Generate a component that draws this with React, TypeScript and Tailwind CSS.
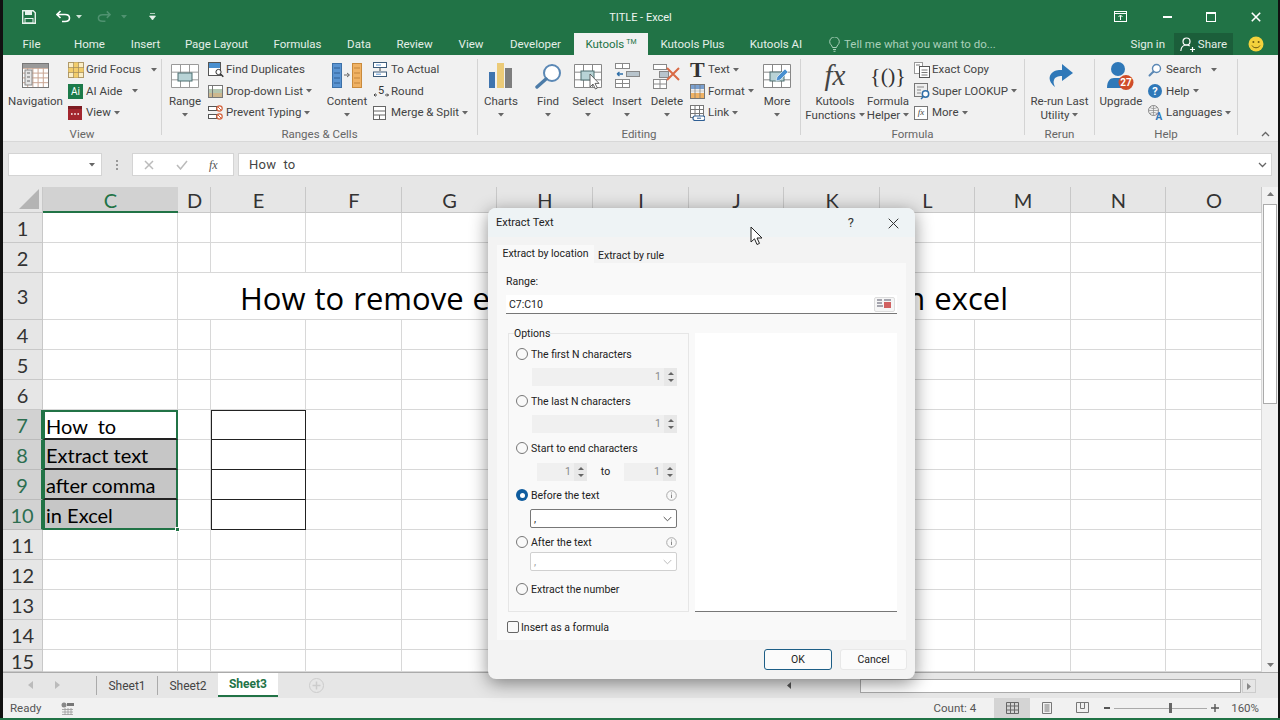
import { ReactNode } from "react";

const UI = "font-['Roboto','Open_Sans',sans-serif]";
const SHEET = "font-['Lato','Open_Sans',sans-serif]";

function Caret({ className = "" }: { className?: string }) {
  return (
    <svg width="6" height="4" viewBox="0 0 6 4" className={className}>
      <path d="M0 0h6L3 3.500z" fill="#666" />
    </svg>
  );
}

function Sheetlet({ w = 28, h = 24, cols = 4, rows = 4, color = "#8a8a8a", children }: { w?: number; h?: number; cols?: number; rows?: number; color?: string; children?: ReactNode }) {
  const lines = [];
  for (let i = 0; i <= cols; i++) lines.push(<line key={"c" + i} x1={0.5 + ((w - 1) * i) / cols} x2={0.5 + ((w - 1) * i) / cols} y1="0.5" y2={h - 0.5} stroke={color} strokeWidth="1" />);
  for (let i = 0; i <= rows; i++) lines.push(<line key={"r" + i} y1={0.5 + ((h - 1) * i) / rows} y2={0.5 + ((h - 1) * i) / rows} x1="0.5" x2={w - 0.5} stroke={color} strokeWidth="1" />);
  return (
    <svg width={w} height={h} viewBox={`0 0 ${w} ${h}`} className="overflow-visible">
      <rect x="0.5" y="0.5" width={w - 1} height={h - 1} fill="#fff" />
      {lines}
      {children}
    </svg>
  );
}

const icons: Record<string, ReactNode> = {
  nav: (
    <Sheetlet w={27} h={25} cols={5} rows={5} color="#c9a593">
      <rect x="0.5" y="0.5" width="26" height="24" fill="none" stroke="#777" />
      <rect x="1" y="1" width="25" height="4" fill="#9a9a9a" />
      <rect x="3" y="7" width="7" height="15" fill="#e5e5e5" stroke="#888" />
      <path d="M5 10h3M5 14h3M5 18h3" stroke="#666" />
    </Sheetlet>
  ),
  focus: (
    <svg width="16" height="16" viewBox="0 0 16 16">
      <rect x="0.5" y="0.5" width="15" height="15" fill="#fbeec5" stroke="#b09a6a" />
      <rect x="5.5" y="0.5" width="5" height="15" fill="#f2cd6b" />
      <rect x="0.5" y="5.5" width="15" height="5" fill="#f2cd6b" />
      <path d="M5.500 0v16M10.500 0v16M0 5.500h16M0 10.500h16" stroke="#a08a5a" strokeWidth="0.7" />
    </svg>
  ),
  ai: <div className="flex h-[15px] w-[15px] items-center justify-center bg-[#1c7a4a] text-[10px] text-white">Ai</div>,
  view: (
    <svg width="14" height="14" viewBox="0 0 14 14">
      <rect width="14" height="14" fill="#a3262e" />
      <rect y="0" width="14" height="3" fill="#7d1c22" />
      <path d="M3 8h1.600M6.200 8h1.600M9.400 8H11" stroke="#fff" strokeWidth="1.6" />
    </svg>
  ),
  range: (
    <Sheetlet w={28} h={24} cols={3} rows={3} color="#9a9a9a">
      <rect x="7" y="9" width="14" height="8" fill="#b8d3d6" stroke="#4d6f71" />
    </Sheetlet>
  ),
  dup: (
    <svg width="16" height="16" viewBox="0 0 16 16">
      <rect x="0.5" y="0.5" width="12" height="13" fill="#fff" stroke="#555" />
      <rect x="1" y="1" width="11" height="5" fill="#4a90d0" />
      <circle cx="10.5" cy="10" r="2.6" fill="#fff" stroke="#333" />
      <path d="M12.500 12l2.800 2.800" stroke="#333" strokeWidth="1.5" />
    </svg>
  ),
  drop: (
    <svg width="15" height="13" viewBox="0 0 15 13">
      <rect x="0.5" y="0.5" width="14" height="12" fill="#fff" stroke="#777" />
      <rect x="1" y="4" width="13" height="4" fill="#b4c6b0" />
      <rect x="1" y="8" width="13" height="4" fill="#cdb78e" />
      <path d="M4.500 0v13" stroke="#777" />
    </svg>
  ),
  prevent: (
    <svg width="15" height="15" viewBox="0 0 15 15">
      <rect x="0.5" y="1.5" width="8" height="4" fill="#fff" stroke="#555" />
      <rect x="0.5" y="9.5" width="8" height="4" fill="#fff" stroke="#555" />
      <circle cx="11.5" cy="3.5" r="2.7" fill="#fff" stroke="#d2603a" strokeWidth="1.2" />
      <circle cx="11.5" cy="11.5" r="2.7" fill="#fff" stroke="#d2603a" strokeWidth="1.2" />
      <path d="M9.800 1.800l3.400 3.400M9.800 9.800l3.400 3.400" stroke="#d2603a" />
    </svg>
  ),
  content: (
    <svg width="30" height="25" viewBox="0 0 30 25">
      <rect x="0.5" y="0.5" width="9" height="24" fill="#5a94d2" stroke="#3c70a8" />
      <rect x="20.5" y="0.5" width="9" height="24" fill="#f0b264" stroke="#c98a3c" />
      <path d="M2 5h6M2 10h6M2 15h6M2 20h6" stroke="#2f5f94" />
      <path d="M22 5h6M22 10h6M22 15h6M22 20h6" stroke="#c4853a" />
      <path d="M12 12h5M15 10l2.500 2-2.500 2" stroke="#666" fill="none" />
    </svg>
  ),
  actual: (
    <svg width="14" height="15" viewBox="0 0 14 15">
      <rect x="0.5" y="0.5" width="13" height="5" fill="#fff" stroke="#3c5a78" />
      <rect x="0.5" y="10" width="13" height="4.5" fill="#fff" stroke="#3c5a78" />
      <path d="M3 3h5M3 12.200h5" stroke="#5a94d2" />
      <path d="M7 6v3" stroke="#444" />
    </svg>
  ),
  round: (
    <svg width="16" height="16" viewBox="0 0 16 16" className="overflow-visible">
      <path d="M1 12h3M1 12l1.500-1.500M1 12l1.500 1.500M12 12h3.500M15.500 12L14 10.500M15.500 12L14 13.500" stroke="#444" fill="none" />
      <text x="5" y="11" fontSize="11" fill="#333" fontFamily="Roboto">5</text>
    </svg>
  ),
  merge: (
    <svg width="13" height="14" viewBox="0 0 13 14">
      <rect x="0.5" y="0.5" width="12" height="13" fill="#fff" stroke="#666" />
      <path d="M0 5h13M0 9h13M6.500 9v5" stroke="#666" />
    </svg>
  ),
  charts: (
    <svg width="24" height="25" viewBox="0 0 24 25">
      <rect x="0" y="9" width="6" height="16" fill="#3f74ae" />
      <rect x="8" y="0" width="7" height="25" fill="#eccb78" />
      <rect x="16" y="5" width="7" height="20" fill="#7e7e7e" />
    </svg>
  ),
  find: (
    <svg width="27" height="26" viewBox="0 0 27 26">
      <circle cx="17" cy="10" r="8" fill="#fff" stroke="#5b88b5" strokeWidth="2" />
      <path d="M11 16l-9 8" stroke="#4d7ca8" strokeWidth="3.4" strokeLinecap="round" />
    </svg>
  ),
  select: (
    <Sheetlet w={28} h={24} cols={3} rows={3} color="#888">
      <rect x="7" y="7" width="13" height="9" fill="#b8d3d6" stroke="#4d6f71" />
      <path d="M16 10v13l3-3 2.400 5 2-1-2.400-4.600h4z" fill="#fff" stroke="#555" strokeWidth="0.9" />
    </Sheetlet>
  ),
  insert: (
    <svg width="25" height="25" viewBox="0 0 25 25">
      <rect x="0.5" y="0.5" width="14" height="5" fill="#fff" stroke="#888" />
      <path d="M7.500 0v6" stroke="#888" />
      <path d="M2 11h6M2 11l2.500-2M2 11l2.500 2" stroke="#2f6fa8" strokeWidth="1.3" fill="none" />
      <rect x="11.5" y="8.5" width="13" height="5" fill="#b8c4cc" stroke="#888" />
      <rect x="0.5" y="16.5" width="14" height="8" fill="#fff" stroke="#888" />
      <path d="M7.500 16v8M0 20.500h14" stroke="#888" />
    </svg>
  ),
  del: (
    <svg width="28" height="26" viewBox="0 0 28 26">
      <rect x="0.5" y="1.5" width="13" height="5" fill="#fff" stroke="#888" />
      <rect x="6.5" y="8.5" width="9" height="6" fill="#b8c4cc" stroke="#888" />
      <rect x="0.5" y="16.5" width="13" height="9" fill="#fff" stroke="#888" />
      <path d="M7 16v9M0 21h13" stroke="#888" />
      <path d="M14 5l12 12M26 5L14 17" stroke="#d96a45" strokeWidth="2" />
    </svg>
  ),
  text: <span className="font-['Liberation_Serif',serif] text-[22px] leading-none font-bold text-[#333]">T</span>,
  format: (
    <svg width="15" height="15" viewBox="0 0 15 15">
      <rect x="0.5" y="0.5" width="14" height="14" fill="#fff" stroke="#777" />
      <rect x="1" y="1" width="13" height="4" fill="#7aa0d0" />
      <rect x="1" y="5.5" width="13" height="3" fill="#ddd" />
      <rect x="1" y="9" width="13" height="5" fill="#f0b264" />
      <path d="M5 0v15M10 0v15" stroke="#777" strokeWidth="0.7" />
    </svg>
  ),
  link: (
    <svg width="15" height="16" viewBox="0 0 15 16">
      <rect x="0.5" y="0.5" width="13" height="12" fill="#fff" stroke="#777" />
      <path d="M5 0v13M9.500 0v13M0 4.500h14M0 8.500h14" stroke="#777" />
      <rect x="3" y="11" width="12" height="4.5" rx="2" fill="#fff" stroke="#2f5f94" strokeWidth="1.2" />
      <path d="M7 13.200h4" stroke="#2f5f94" />
    </svg>
  ),
  more: (
    <Sheetlet w={28} h={24} cols={3} rows={3} color="#888">
      <rect x="7" y="8" width="14" height="9" fill="#b8d3d6" stroke="#4d6f71" />
      <path d="M13 17l1-4 8-8 3 3-8 8z" fill="#4a90d0" stroke="#fff" strokeWidth="0.6" />
    </Sheetlet>
  ),
  fx: <span className="font-['Liberation_Serif',serif] text-[29px] leading-none text-[#444] italic">fx</span>,
  brace: <span className="font-['Liberation_Serif',serif] text-[22px] leading-none text-[#333]">{"{()}"}</span>,
  exact: (
    <svg width="16" height="16" viewBox="0 0 16 16">
      <rect x="0.5" y="0.5" width="8" height="11" fill="#fff" stroke="#999" />
      <rect x="5.5" y="4.5" width="10" height="11" fill="#fff" stroke="#555" />
      <path d="M7.500 8h6M7.500 10.500h6M7.500 13h6M2 3h4" stroke="#777" />
    </svg>
  ),
  lookup: (
    <svg width="17" height="17" viewBox="0 0 17 17">
      <rect x="0.5" y="0.5" width="13" height="13" fill="#eee" stroke="#777" />
      <path d="M3 4h7M3 7h4M3 10h4" stroke="#888" />
      <circle cx="11.5" cy="11" r="3.2" fill="#fff" stroke="#2f6fa8" strokeWidth="1.5" />
      <path d="M9 14l-2 2" stroke="#2f6fa8" strokeWidth="1.5" />
    </svg>
  ),
  morefx: (
    <div className="flex h-[14px] w-[14px] items-center justify-center border border-[#777] bg-white font-['Liberation_Serif',serif] text-[9px] text-[#444] italic">fx</div>
  ),
  rerun: (
    <svg width="26" height="25" viewBox="0 0 26 25">
      <path d="M8 24C3 20 1 15 4 11c3-4 7-4 11-4V1l11 9-11 8v-5c-4 0-7 1-8 4-1 2 0 5 1 7z" fill="#2f78b8" />
    </svg>
  ),
  upgrade: (
    <svg width="29" height="28" viewBox="0 0 29 28">
      <circle cx="11" cy="7" r="7" fill="#2f78b8" />
      <path d="M0 26c0-7 3-10 7-10h7c2 0 3 1 4 2v8z" fill="#2f78b8" />
      <circle cx="19" cy="20.500" r="7.500" fill="#cf4d2a" />
      <text x="19" y="24" textAnchor="middle" fontSize="10" fontWeight="700" fill="#fff" fontFamily="Roboto">27</text>
    </svg>
  ),
  search: (
    <svg width="14" height="14" viewBox="0 0 14 14">
      <circle cx="8.5" cy="5.5" r="4" fill="#fff" stroke="#5b88b5" strokeWidth="1.4" />
      <path d="M5.500 8.500L1.500 12.500" stroke="#5b88b5" strokeWidth="2" strokeLinecap="round" />
    </svg>
  ),
  help: (
    <svg width="14" height="14" viewBox="0 0 14 14">
      <circle cx="7" cy="7" r="7" fill="#2f78b8" />
      <text x="7" y="11" textAnchor="middle" fontSize="11" fontWeight="700" fill="#fff" fontFamily="Roboto">?</text>
    </svg>
  ),
  lang: (
    <svg width="16" height="16" viewBox="0 0 16 16" className="overflow-visible">
      <circle cx="5.5" cy="5.5" r="5" fill="none" stroke="#888" />
      <path d="M.500 5.500h10M5.500.500v10M2 2.500c2 1.400 5 1.400 7 0M2 8.500c2-1.400 5-1.400 7 0" stroke="#888" strokeWidth="0.7" fill="none" />
      <text x="7.5" y="15" fontSize="10" fontWeight="700" fill="#2f78b8" fontFamily="Roboto">A</text>
    </svg>
  ),
};

function Large({ icon, label, second, w, caret = true }: { icon: string; label: string; second?: string; w: string; caret?: boolean }) {
  return (
    <div className={`flex shrink-0 flex-col items-center ${w}`}>
      <div className="flex h-[33px] items-center justify-center">{icons[icon]}</div>
      <div className="mt-[2px] h-[14px] text-center leading-[14px] whitespace-nowrap">{label}</div>
      <div className="flex h-[14px] items-center gap-[3px] leading-[14px] whitespace-nowrap">
        {second}
        {caret && <Caret />}
      </div>
    </div>
  );
}

function Small({ icon, label, caret = true, caretGap = "ml-[3px]" }: { icon: string; label: string; caret?: boolean; caretGap?: string }) {
  return (
    <div className="flex h-[21.5px] items-center whitespace-nowrap">
      <div className="flex w-[18px] shrink-0 items-center">{icons[icon]}</div>
      <span>{label}</span>
      {caret && <Caret className={caretGap} />}
    </div>
  );
}

function Group({ w, label, children }: { w: string; label: string; children: ReactNode }) {
  return (
    <div className={`flex h-[86px] shrink-0 flex-col ${w}`}>
      <div className="flex h-[71px] pt-[4px]">{children}</div>
      <div className="h-[14px] pt-px text-center leading-[14px] text-[#666]">{label}</div>
    </div>
  );
}

function Sep() {
  return <div className="mt-[4px] h-[76px] w-px shrink-0 bg-[#d4d4d4]" />;
}

const tabs = [
  ["File", "w-[57px]"],
  ["Home", "w-[59px]"],
  ["Insert", "w-[53px]"],
  ["Page Layout", "w-[89px]"],
  ["Formulas", "w-[73px]"],
  ["Data", "w-[50px]"],
  ["Review", "w-[61px]"],
  ["View", "w-[52px]"],
  ["Developer", "w-[77px]"],
];

function Ribbon() {
  return (
    <div className="flex h-[87px] border-b border-[#d8d8d8] bg-[#f1f1f1] text-[11.5px] text-[#444]">
      <Group w="w-[158px]" label="View">
        <Large icon="nav" label="Navigation" w="w-[65px]" caret={false} />
        <div className="flex flex-col">
          <Small icon="focus" label="Grid Focus" caretGap="ml-[10px]" />
          <Small icon="ai" label="AI Aide" caretGap="ml-[10px]" />
          <Small icon="view" label="View" />
        </div>
      </Group>
      <Sep />
      <Group w="w-[315px]" label="Ranges & Cells">
        <Large icon="range" label="Range" w="w-[46px]" />
        <div className="flex w-[116px] flex-col">
          <Small icon="dup" label="Find Duplicates" caret={false} />
          <Small icon="drop" label="Drop-down List" />
          <Small icon="prevent" label="Prevent Typing" />
        </div>
        <Large icon="content" label="Content" w="w-[46px]" />
        <div className="ml-[3px] flex flex-col">
          <Small icon="actual" label="To Actual" caret={false} />
          <Small icon="round" label="Round" caret={false} />
          <Small icon="merge" label="Merge & Split" />
        </div>
      </Group>
      <Sep />
      <Group w="w-[322px]" label="Editing">
        <Large icon="charts" label="Charts" w="w-[46px]" />
        <Large icon="find" label="Find" w="w-[48px]" />
        <Large icon="select" label="Select" w="w-[32px]" />
        <Large icon="insert" label="Insert" w="w-[46px]" />
        <Large icon="del" label="Delete" w="w-[34px]" />
        <div className="ml-[6px] flex w-[67px] flex-col">
          <Small icon="text" label="Text" />
          <Small icon="format" label="Format" />
          <Small icon="link" label="Link" />
        </div>
        <Large icon="more" label="More" w="w-[40px]" />
      </Group>
      <Sep />
      <Group w="w-[223px]" label="Formula">
        <Large icon="fx" label="Kutools" second="Functions" w="w-[68px]" />
        <Large icon="brace" label="Formula" second="Helper" w="w-[38px]" />
        <div className="ml-[7px] flex flex-col">
          <Small icon="exact" label="Exact Copy" caret={false} />
          <Small icon="lookup" label="Super LOOKUP" />
          <Small icon="morefx" label="More" />
        </div>
      </Group>
      <Sep />
      <Group w="w-[69px]" label="Rerun">
        <Large icon="rerun" label="Re-run Last" second="Utility" w="w-[69px]" />
      </Group>
      <Sep />
      <Group w="w-[142px]" label="Help">
        <Large icon="upgrade" label="Upgrade" w="w-[52px]" caret={false} />
        <div className="ml-px flex flex-col">
          <Small icon="search" label="Search" caretGap="ml-[10px]" />
          <Small icon="help" label="Help" />
          <Small icon="lang" label="Languages" />
        </div>
      </Group>
      <Sep />
      <div className="flex flex-1 items-end justify-end pr-[8px] pb-[4px]">
        <svg width="9" height="6" viewBox="0 0 9 6">
          <path d="M1 5l3.500-3.500L8 5" fill="none" stroke="#666" strokeWidth="1.3" />
        </svg>
      </div>
    </div>
  );
}

function TitleBar() {
  return (
    <div className="flex h-[33px] items-center bg-[#217346] text-white">
      <div className="flex flex-1 items-center">
        <svg width="14" height="14" viewBox="0 0 14 14" className="ml-[19px]">
          <path d="M.7.700h10.500l2.100 2.100v10.500H.7z" fill="none" stroke="#e8f2ec" strokeWidth="1.4" />
          <rect x="3" y="1" width="7" height="4" fill="#e8f2ec" />
          <rect x="3" y="8.5" width="8" height="4.5" fill="none" stroke="#e8f2ec" />
        </svg>
        <svg width="15" height="13" viewBox="0 0 15 13" className="ml-[20px]">
          <path d="M4.500 1L1 4.500 4.500 8M1 4.500h8c6 0 6 7 0 7H6" fill="none" stroke="#fff" strokeWidth="1.6" />
        </svg>
        <Caret className="ml-[5px] [&_path]:fill-[#cfe3d7]" />
        <svg width="14" height="13" viewBox="0 0 15 13" className="ml-[15px]">
          <path d="M10.500 1L14 4.500 10.500 8M14 4.500H6c-6 0-6 7 0 7h3" fill="none" stroke="#4f9270" strokeWidth="1.6" />
        </svg>
        <Caret className="ml-[10px] [&_path]:fill-[#4f9270]" />
        <svg width="7" height="8" viewBox="0 0 7 8" className="ml-[22px]">
          <path d="M1 .5h5M.5 3h6L3.500 7z" stroke="#e8f2ec" fill="#e8f2ec" strokeWidth="0.7" />
        </svg>
      </div>
      <div className={`${UI} pt-[3px] text-[11px] text-[#eef5f0]`}>TITLE - Excel</div>
      <div className="flex flex-1 items-center justify-end">
        <svg width="13" height="11" viewBox="0 0 13 11" className="mr-[36px]">
          <rect x="0.5" y="0.5" width="12" height="10" fill="none" stroke="#fff" />
          <path d="M.5 2.500h12M6.500 9V4.500M4.500 6l2-2 2 2" stroke="#fff" fill="none" />
        </svg>
        <div className="mr-[34px] h-[2px] w-[9px] bg-white" />
        <div className="mr-[35px] h-[10px] w-[10px] border border-t-2 border-white" />
        <svg width="10" height="10" viewBox="0 0 10 10" className="mr-[17px]">
          <path d="M.8.800l8.400 8.400M9.200.800L.8 9.200" stroke="#fff" strokeWidth="1.6" />
        </svg>
      </div>
    </div>
  );
}

function TabBar() {
  return (
    <div className={`${UI} flex h-[22px] items-center bg-[#217346] text-[11.5px] text-[#e4efe8]`}>
      {tabs.map(([t, w]) => (
        <div key={t} className={`pt-px text-center ${w}`}>
          {t}
        </div>
      ))}
      <div className="flex h-[22px] w-[74px] items-center justify-center bg-[#f1f1f1] pt-px text-[#217346]">
        Kutools <span className="mb-[4px] ml-[2px] text-[7px]">TM</span>
      </div>
      <div className="w-[89px] pt-px text-center">Kutools Plus</div>
      <div className="w-[78px] pt-px text-center">Kutools AI</div>
      <svg width="11" height="15" viewBox="0 0 11 15" className="ml-[14px]">
        <path d="M3.500 10.500C3 8 .7 7.500.7 4.700a4.800 4.800 0 019.600 0c0 2.800-2.300 3.300-2.800 5.800zM4 12.500h3M4.500 14.300h2" fill="none" stroke="#a9d0ba" />
      </svg>
      <div className="ml-[4px] pt-px text-[#a9d0ba]">Tell me what you want to do...</div>
      <div className="ml-auto pt-px">Sign in</div>
      <div className="ml-[9px] flex h-[22px] w-[59px] items-center justify-center gap-[3px] bg-[#1b5e3a] pt-px">
        <svg width="15" height="15" viewBox="0 0 15 15">
          <circle cx="6.5" cy="4.5" r="3.5" fill="none" stroke="#fff" strokeWidth="1.2" />
          <path d="M.8 14c.3-4 2.400-6 5.700-6 1.400 0 2.400.4 3.200 1M10 12.500h5M12.500 10v5" fill="none" stroke="#fff" strokeWidth="1.2" />
        </svg>
        Share
      </div>
      <svg width="16" height="16" viewBox="0 0 16 16" className="mr-[14px] ml-[15px]">
        <circle cx="8" cy="8" r="7.5" fill="#f4d23c" />
        <circle cx="5.4" cy="6" r="1" fill="#6b5a10" />
        <circle cx="10.6" cy="6" r="1" fill="#6b5a10" />
        <path d="M4 9.500c1.500 3 6.500 3 8 0" fill="none" stroke="#6b5a10" />
      </svg>
    </div>
  );
}

function FormulaBar() {
  return (
    <div className="flex h-[45px] bg-[#e6e6e6] pt-[11px] text-[#555]">
      <div className="ml-[5px] flex h-[23px] w-[94px] items-center justify-end border border-[#d4d4d4] bg-white pr-[6px]">
        <Caret />
      </div>
      <div className="flex h-[23px] w-[30px] flex-col items-center justify-center gap-[2px]">
        <div className="h-[2px] w-[2px] bg-[#999]" />
        <div className="h-[2px] w-[2px] bg-[#999]" />
        <div className="h-[2px] w-[2px] bg-[#999]" />
      </div>
      <div className="flex h-[23px] w-[102px] items-center border border-[#d4d4d4] bg-white">
        <svg width="10" height="10" viewBox="0 0 10 10" className="ml-[11px]">
          <path d="M1 1l8 8M9 1L1 9" stroke="#bbb" strokeWidth="1.5" />
        </svg>
        <svg width="12" height="10" viewBox="0 0 12 10" className="ml-[22px]">
          <path d="M1 5l3.500 4L11 1" fill="none" stroke="#bbb" strokeWidth="1.5" />
        </svg>
        <span className="ml-[21px] font-['Liberation_Serif',serif] text-[12px] text-[#555] italic">fx</span>
      </div>
      <div className={`${UI} ml-[4px] flex h-[23px] flex-1 items-center border border-[#d4d4d4] bg-white pl-[10px] text-[13px] tracking-[0.3px] text-[#444]`}>
        How&nbsp; to
        <svg width="9" height="6" viewBox="0 0 9 6" className="mr-[4px] ml-auto">
          <path d="M1 1l3.500 3.500L8 1" fill="none" stroke="#666" strokeWidth="1.3" />
        </svg>
      </div>
      <div className="w-[6px]" />
    </div>
  );
}

const colNames = ["C", "D", "E", "F", "G", "H", "I", "J", "K", "L", "M", "N", "O"];
const rowsList = [1, 2, 3, 4, 5, 6, 7, 8, 9, 10, 11, 12, 13, 14, 15];
const colText: Record<number, string> = { 7: "How  to", 8: "Extract text", 9: "after comma", 10: "in Excel" };

function cellClass(r: number, c: string) {
  if (c === "C" && r === 7) return "border-2 border-[#217346] border-b-[#222] bg-white";
  if (c === "C" && (r === 8 || r === 9)) return "border-x-2 border-b-2 border-x-[#217346] border-b-[#222] bg-[#c6c6c6]";
  if (c === "C" && r === 10) return "border-x-2 border-b-2 border-[#217346] bg-[#c6c6c6]";
  if (c === "E" && r === 7) return "border-[1.5px] border-[#222]";
  if (c === "E" && r >= 8 && r <= 10) return "border-x-[1.5px] border-b-[1.5px] border-[#222]";
  return "border-r border-b border-[#d8d8d8]";
}

function Grid() {
  return (
    <div className={`${SHEET} relative grid h-[485px] w-[1259px] grid-cols-[40px_135px_33px_95px_96px_95px_96px_96px_95px_96px_95px_96px_95px_96px] grid-rows-[26px_30px_30px_47px_30px_30px_30px_30px_30px_30px_30px_30px_30px_30px_30px_22px] overflow-hidden bg-white`}>
      <div className="flex items-end justify-end border-r border-b border-[#c8c8c8] bg-[#e6e6e6] pr-[3px] pb-[3px]">
        <div className="h-0 w-0 [border-top:0] [border-bottom:20px_solid_#b4b4b4] [border-left:20px_solid_transparent]" />
      </div>
      {colNames.map((c) => (
        <div key={c} className={c === "C" ? "flex items-center justify-center border-b-2 border-b-[#217346] bg-[#d2d2d2] pt-px text-[20px] text-[#217346]" : "flex items-center justify-center border-r border-b border-[#c8c8c8] bg-[#e6e6e6] pt-px pl-px text-[20px] text-[#333]"}>
          {c}
        </div>
      ))}
      {rowsList.map((r) => (
        <div key={r} className="contents">
          <div className={r >= 7 && r <= 10 ? "flex items-center justify-center border-r-2 border-b border-r-[#217346] border-b-[#bbb] bg-[#d2d2d2] text-[20px] text-[#2c6e50]" : "flex items-center justify-center border-r border-b border-[#c8c8c8] bg-[#e6e6e6] text-[20px] text-[#333]"}>
            {r}
          </div>
          {r === 3 ? (
            <>
              <div className="border-r border-b border-[#d8d8d8]" />
              <div className="col-span-10 flex items-center justify-center border-r border-b border-[#d8d8d8] pt-[5px] font-['Open_Sans',sans-serif] text-[31px] [word-spacing:1px] whitespace-nowrap text-black">
                How to remove extract text after the comma in excel
              </div>
              <div className="border-r border-b border-[#d8d8d8]" />
              <div className="border-r border-b border-[#d8d8d8]" />
            </>
          ) : (
            colNames.map((c) => (
              <div key={c} className={`${cellClass(r, c)} flex items-center overflow-hidden pt-px pl-px text-[20px] whitespace-pre text-black`}>
                {c === "C" ? colText[r] : ""}
              </div>
            ))
          )}
        </div>
      ))}
      <div className="absolute top-[340px] left-[172px] h-[5px] w-[5px] border border-white bg-[#217346]" />
    </div>
  );
}

function VScroll() {
  return (
    <div className="flex h-[485px] w-[16px] flex-col items-center bg-[#f1f1f1] pt-[5px]">
      <svg width="7" height="4" viewBox="0 0 7 4">
        <path d="M0 4l3.500-4L7 4z" fill="#777" />
      </svg>
      <div className="mt-[8px] h-[200px] w-[14px] border border-[#ababab] bg-white" />
      <svg width="7" height="4" viewBox="0 0 7 4" className="mt-auto mb-[5px]">
        <path d="M0 0l3.500 4L7 0z" fill="#777" />
      </svg>
    </div>
  );
}

function SheetTabs() {
  return (
    <div className={`${UI} flex h-[26px] border-t border-[#ababab] bg-[#e6e6e6] text-[12px] text-[#444]`}>
      <svg width="5" height="8" viewBox="0 0 5 8" className="mt-[8px] ml-[25px]">
        <path d="M5 0v8L0 4z" fill="#bbb" />
      </svg>
      <svg width="5" height="8" viewBox="0 0 5 8" className="mt-[8px] ml-[22px]">
        <path d="M0 0v8l5-4z" fill="#bbb" />
      </svg>
      <div className="mt-[3px] ml-[36px] h-[19px] w-px bg-[#aaa]" />
      <div className="flex w-[60px] items-center justify-center">Sheet1</div>
      <div className="mt-[3px] h-[19px] w-px bg-[#aaa]" />
      <div className="flex w-[60px] items-center justify-center">Sheet2</div>
      <div className="flex h-[24px] w-[60px] items-center justify-center border-b-2 border-[#217346] bg-white font-bold text-[#217346]">Sheet3</div>
      <svg width="15" height="15" viewBox="0 0 15 15" className="mt-[5px] ml-[31px]">
        <circle cx="7.5" cy="7.5" r="7" fill="none" stroke="#ccc" />
        <path d="M7.500 3.500v8M3.500 7.500h8" stroke="#ccc" strokeWidth="1.5" />
      </svg>
      <div className="ml-[457px] flex h-[25px] w-[15px] items-center justify-center">
        <svg width="4" height="7" viewBox="0 0 4 7">
          <path d="M4 0v7L0 3.500z" fill="#555" />
        </svg>
      </div>
      <div className="mt-[6px] ml-[64px] h-[14px] w-[381px] border border-[#ababab] bg-white" />
      <div className="mt-[6px] ml-px flex h-[14px] w-[14px] items-center justify-center border border-[#ccc]">
        <svg width="4" height="7" viewBox="0 0 4 7">
          <path d="M0 0v7l4-3.500z" fill="#888" />
        </svg>
      </div>
    </div>
  );
}

function StatusBar() {
  return (
    <div className={`${UI} flex h-[20px] items-center bg-[#f1f1f1] text-[11.5px] text-[#555]`}>
      <span className="ml-[7px] pt-px">Ready</span>
      <svg width="13" height="13" viewBox="0 0 13 13" className="ml-[20px]">
        <circle cx="3" cy="3" r="2.500" fill="#888" />
        <rect x="6" y="1" width="7" height="3" fill="#777" />
        <path d="M1 7.500h11M1 10h11M1 12.500h11M4 6v7M7 6v7M10 6v7" stroke="#999" strokeWidth="0.8" />
      </svg>
      <div className="mr-[19px] ml-auto flex h-[20px] items-center">
        <span className="pt-px">Count: 4</span>
        <div className="ml-[18px] flex h-[20px] w-[36px] items-center justify-center bg-[#d4d4d4]">
          <svg width="13" height="12" viewBox="0 0 13 12">
            <path d="M.5.500h12v11H.5zM.5 4h12M.5 8h12M4.500.500v11M8.500.500v11" fill="none" stroke="#666" />
          </svg>
        </div>
        <svg width="10" height="12" viewBox="0 0 10 12" className="ml-[12px]">
          <path d="M.5.500h9v11h-9zM2.500 3h5M2.500 5h5M2.500 7h5M2.500 9h5" fill="none" stroke="#777" />
        </svg>
        <svg width="13" height="12" viewBox="0 0 13 12" className="ml-[24px]">
          <path d="M.5.500h12v10H.5zM4.500.500v6h4v-6" fill="none" stroke="#777" />
        </svg>
        <div className="ml-[15px] h-[2px] w-[6px] bg-[#555]" />
        <div className="relative ml-[4px] flex h-[10px] w-[93px] items-center">
          <div className="h-px w-full bg-[#aaa]" />
          <div className="absolute left-[55px] h-[10px] w-[3px] bg-[#666]" />
        </div>
        <svg width="8" height="8" viewBox="0 0 8 8" className="ml-[4px]">
          <path d="M4 0v8M0 4h8" stroke="#555" strokeWidth="1.400" />
        </svg>
        <span className="ml-[12px] pt-px">160%</span>
      </div>
    </div>
  );
}

function Radio({ on, label }: { on?: boolean; label: string }) {
  return (
    <div className="flex h-[18px] items-center">
      {on ? (
        <div className="flex h-[12px] w-[12px] items-center justify-center rounded-full bg-[#0f5c9e]">
          <div className="h-[5px] w-[5px] rounded-full bg-white" />
        </div>
      ) : (
        <div className="h-[12px] w-[12px] rounded-full border border-[#777]" />
      )}
      <span className="ml-[3px] pt-px whitespace-nowrap">{label}</span>
    </div>
  );
}

function Spin({ w }: { w: string }) {
  return (
    <div className={`flex h-[18px] items-center bg-[#f0f0f0] ${w}`}>
      <span className="ml-auto pr-[3px] text-[#888]">1</span>
      <div className="flex h-[18px] w-[13px] flex-col items-center justify-center gap-[4px] bg-[#e8e8e8]">
        <svg width="6" height="3" viewBox="0 0 6 3">
          <path d="M0 3l3-3 3 3z" fill="#666" />
        </svg>
        <svg width="6" height="3" viewBox="0 0 6 3">
          <path d="M0 0l3 3 3-3z" fill="#666" />
        </svg>
      </div>
    </div>
  );
}

function Info() {
  return (
    <svg width="11" height="11" viewBox="0 0 11 11" className="ml-auto">
      <circle cx="5.500" cy="5.500" r="4.800" fill="none" stroke="#aaa" />
      <path d="M5.500 4.500v3.500M5.500 2.500v1" stroke="#888" />
    </svg>
  );
}

function Combo({ dim }: { dim?: boolean }) {
  return (
    <div className={dim ? "ml-[14px] flex h-[19px] w-[147px] items-center rounded-[2px] border border-[#d0d0d0] bg-white pl-[3px] text-[#999]" : "ml-[14px] flex h-[19px] w-[147px] items-center rounded-[2px] border border-[#777] bg-white pl-[3px]"}>
      ,
      <svg width="9" height="6" viewBox="0 0 9 6" className="mr-[4px] ml-auto">
        <path d="M.7 1l3.800 3.800L8.300 1" fill="none" stroke={dim ? "#bbb" : "#555"} />
      </svg>
    </div>
  );
}

function Dialog() {
  return (
    <div className={`${UI} absolute top-[208px] left-[488px] flex h-[471px] w-[427px] flex-col rounded-[8px] bg-[#f3f3f3] text-[10.5px] leading-[14px] text-[#222] shadow-[0_4px_18px_rgba(0,0,0,0.45)]`}>
      <div className="flex h-[29px] items-center rounded-t-[8px] bg-[#eef3f5] pt-px pl-[8px] text-[11px]">
        <span>Extract Text</span>
        <span className="mr-[34px] ml-auto text-[13px] text-[#333]">?</span>
        <svg width="11" height="11" viewBox="0 0 11 11" className="mr-[16px]">
          <path d="M.7.700l9.600 9.600M10.300.700L.7 10.300" stroke="#333" />
        </svg>
      </div>
      <div className="mt-[8px] ml-[9px] flex h-[18px]">
        <div className="flex w-[97px] items-center justify-center bg-[#f9f9f9]">Extract by location</div>
        <div className="ml-[4px] flex items-center pt-[3px]">Extract by rule</div>
      </div>
      <div className="mx-[9px] flex h-[377px] flex-col bg-[#f9f9f9] pt-[11px] pl-[9px]">
        <div className="h-[14px] pt-px leading-[14px]">Range:</div>
        <div className="mt-[7px] flex h-[19px] w-[391px] items-center border-b border-[#777] bg-white pl-[3px]">
          <span className="pt-px">C7:C10</span>
          <div className="mr-[2px] ml-auto flex h-[15px] w-[21px] items-center justify-center rounded-[2px] border border-[#ddd] bg-[#f6f6f6]">
            <svg width="15" height="10" viewBox="0 0 15 10">
              <path d="M0 1h5M0 4h5M0 7h6M7 1h7" stroke="#556" />
              <rect x="7" y="3" width="7" height="6" fill="#c83c3c" opacity="0.8" />
            </svg>
          </div>
        </div>
        <div className="mt-[19px] ml-[2px] flex h-[279px] gap-[6px]">
          <div className="flex h-[279px] w-[181px] flex-col border border-[#e6e6e6] pl-[7px]">
            <div className="-mt-[7px] ml-[-2px] h-[14px] w-fit bg-[#f9f9f9] leading-[14px]">Options</div>
            <div className="mt-[4px] h-[47px]">
              <Radio label="The first N characters" />
              <Spin w="ml-[16px] mt-[5px] w-[145px]" />
            </div>
            <div className="h-[47px]">
              <Radio label="The last N characters" />
              <Spin w="ml-[16px] mt-[5px] w-[145px]" />
            </div>
            <div className="h-[47px]">
              <Radio label="Start to end characters" />
              <div className="mt-[6px] flex items-center">
                <Spin w="ml-[21px] w-[50px]" />
                <span className="w-[37px] text-center">to</span>
                <Spin w="w-[52px]" />
              </div>
            </div>
            <div className="h-[47px]">
              <div className="flex w-[161px] items-center">
                <Radio on label="Before the text" />
                <Info />
              </div>
              <div className="mt-[5px]">
                <Combo />
              </div>
            </div>
            <div className="h-[47px]">
              <div className="flex w-[161px] items-center">
                <Radio label="After the text" />
                <Info />
              </div>
              <div className="mt-px">
                <Combo dim />
              </div>
            </div>
            <Radio label="Extract the number" />
          </div>
          <div className="h-[279px] w-[202px] border-b border-[#777] bg-white" />
        </div>
        <div className="mt-[8px] ml-px flex h-[14px] items-center">
          <div className="h-[12px] w-[12px] rounded-[2px] border border-[#666]" />
          <span className="ml-[2px] pt-px">Insert as a formula</span>
        </div>
      </div>
      <div className="mt-[9px] flex justify-end pr-[8px]">
        <div className="flex h-[21px] w-[68px] items-center justify-center rounded-[3px] border border-[#1d5e86] bg-[#fbfbfb]">OK</div>
        <div className="ml-[8px] flex h-[21px] w-[67px] items-center justify-center rounded-[3px] border border-[#e8e8e8] bg-[#fbfbfb]">Cancel</div>
      </div>
    </div>
  );
}

export default function App() {
  return (
    <div className="relative flex h-[720px] w-[1280px] overflow-hidden bg-[#111]">
      <div className="ml-[3px] flex h-[718px] w-[1275px] flex-col">
        <TitleBar />
        <TabBar />
        <div className={UI}>
          <Ribbon />
        </div>
        <FormulaBar />
        <div className="flex">
          <Grid />
          <VScroll />
        </div>
        <SheetTabs />
        <StatusBar />
      </div>
      <div className="absolute bottom-0 left-0 h-[2px] w-full bg-[#217346]" />
      <Dialog />
      <svg width="13" height="20" viewBox="0 0 13 20" className="absolute top-[226px] left-[750px]">
        <path d="M1 1v15l3.500-3.200L7 18.500l2.500-1.100L7 12h5z" fill="#fff" stroke="#222" />
      </svg>
    </div>
  );
}
